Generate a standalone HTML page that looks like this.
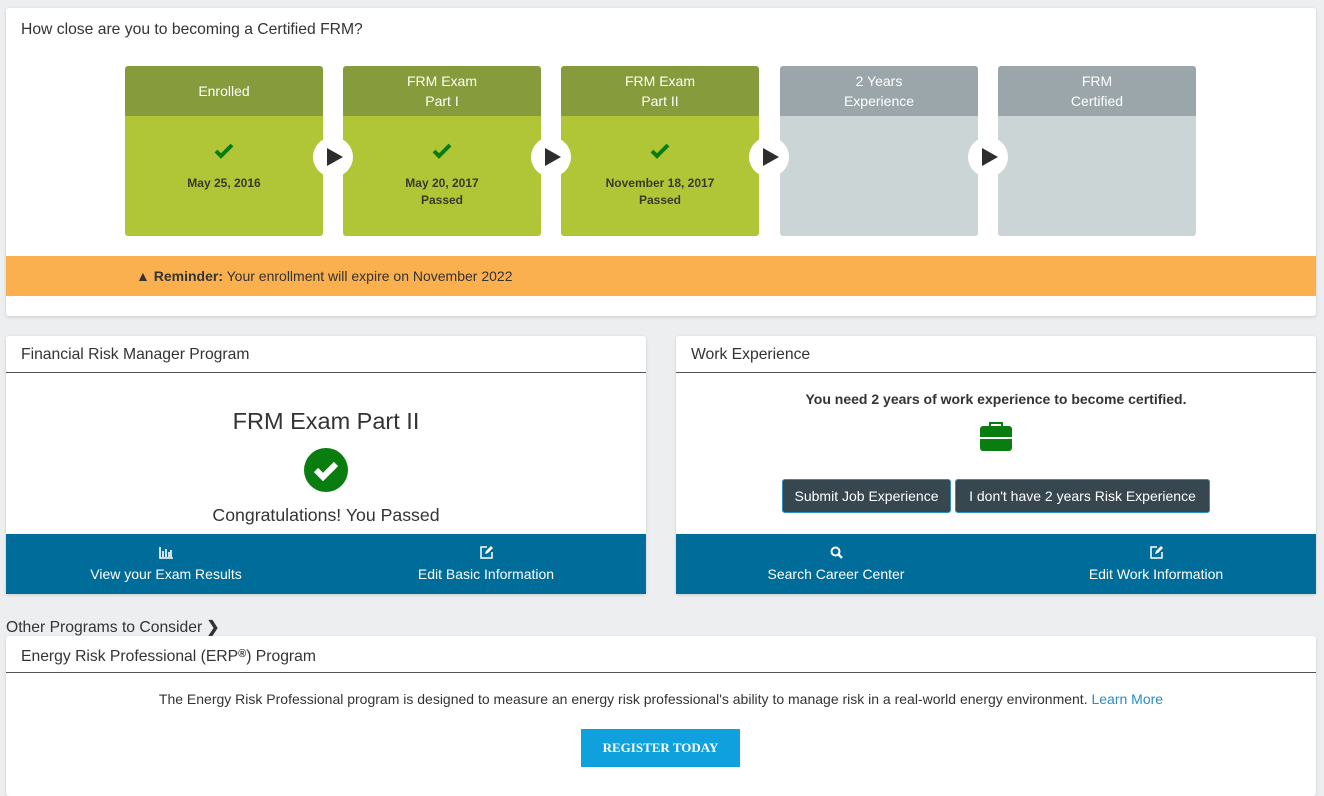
<!DOCTYPE html>
<html><head><style>
*{box-sizing:border-box;margin:0;padding:0}
body{width:1324px;height:779px;overflow:hidden;background:#eceef0;font-family:"Liberation Sans",Arial,sans-serif;color:#333;position:relative}
.card{position:absolute;background:#fff;border-radius:3px;box-shadow:0 1px 3px rgba(0,0,0,.15)}
.abs{position:absolute}
.step{position:absolute;top:66px;width:198px;height:170px;border-radius:3px;overflow:hidden;text-align:center}
.step .h{height:50px;color:#fff;font-size:14px;line-height:20px;display:flex;align-items:center;justify-content:center}
.step .b{height:120px;font-size:12px;font-weight:bold;color:#3a3a2a;line-height:17px}
.g .h{background:#869b3b}.g .b{background:#b0c636}
.x .h{background:#9ba6ab}.x .b{background:#cbd5d6}
.chk{display:block;padding-top:27px;height:59px}
.arr{position:absolute;top:137px;width:40px;height:40px;border-radius:50%;background:#fff}
.arr:after{content:"";position:absolute;left:14px;top:11px;border-left:16px solid #2d2d2d;border-top:9px solid transparent;border-bottom:9px solid transparent}
.hd{height:37px;border-bottom:1px solid #555;padding-left:15px;line-height:37px;font-size:15.7px}
.foot{position:absolute;left:0;right:0;bottom:0;height:60px;background:#006c9a;color:#fff;font-size:14px;display:flex}
.foot div{flex:1;text-align:center;padding-top:10px;line-height:20px}
.btn{position:absolute;background:#37474f;color:#fff;font-size:14px;border:1px solid #2a90c0;border-radius:3px;height:34px;line-height:32px;text-align:center}
</style></head><body>
<div class="card" style="left:6px;top:8px;width:1310px;height:308px">
<div class="abs" style="left:15px;top:13px;font-size:15.7px">How close are you to becoming a Certified FRM?</div>
</div>
<div class="step g" style="left:125px"><div class="h">Enrolled</div><div class="b"><span class="chk"><svg width="20" height="16" viewBox="0 0 20 16"><path d="M2 8l5 5L18 2" fill="none" stroke="#0a7d10" stroke-width="4"/></svg></span>May 25, 2016</div></div>
<div class="step g" style="left:343px"><div class="h">FRM Exam<br>Part I</div><div class="b"><span class="chk"><svg width="20" height="16" viewBox="0 0 20 16"><path d="M2 8l5 5L18 2" fill="none" stroke="#0a7d10" stroke-width="4"/></svg></span>May 20, 2017<br>Passed</div></div>
<div class="step g" style="left:561px"><div class="h">FRM Exam<br>Part II</div><div class="b"><span class="chk"><svg width="20" height="16" viewBox="0 0 20 16"><path d="M2 8l5 5L18 2" fill="none" stroke="#0a7d10" stroke-width="4"/></svg></span>November 18, 2017<br>Passed</div></div>
<div class="step x" style="left:780px"><div class="h">2 Years<br>Experience</div><div class="b"></div></div>
<div class="step x" style="left:998px"><div class="h">FRM<br>Certified</div><div class="b"></div></div>
<div class="arr" style="left:313px"></div><div class="arr" style="left:531px"></div><div class="arr" style="left:749px"></div><div class="arr" style="left:968px"></div>
<div class="abs" style="left:6px;top:256px;width:1310px;height:40px;background:#fbb04f;font-size:14px;line-height:40px;padding-left:130px;color:#333"><b>▲ Reminder:</b> Your enrollment will expire on November 2022</div>

<div class="card" style="left:6px;top:336px;width:640px;height:258px">
<div class="hd">Financial Risk Manager Program</div>
<div class="abs" style="left:0;right:0;top:72px;text-align:center;font-size:23.5px">FRM Exam Part II</div>
<div class="abs" style="left:298px;top:112px;width:44px;height:44px;border-radius:50%;background:#0a7d10"><svg width="44" height="44" viewBox="0 0 44 44"><path d="M12 22l7 7 13-13" fill="none" stroke="#fff" stroke-width="6"/></svg></div>
<div class="abs" style="left:0;right:0;top:169px;text-align:center;font-size:17.7px">Congratulations! You Passed</div>
<div class="foot"><div><svg width="14" height="12" viewBox="0 0 14 12"><path d="M1 0v11h13M4 4v6M7 2v8M10 5v5M12 3v7" stroke="#fff" stroke-width="1.6" fill="none"/></svg><br>View your Exam Results</div><div><svg width="13" height="13" viewBox="0 0 13 13"><path d="M7 1H1v11h11V6" stroke="#fff" stroke-width="1.5" fill="none"/><path d="M5 8l1-3 5-5 2 2-5 5z" fill="#fff"/></svg><br>Edit Basic Information</div></div>
</div>

<div class="card" style="left:676px;top:336px;width:640px;height:258px">
<div class="hd">Work Experience</div>
<div class="abs" style="left:0;right:0;top:55px;text-align:center;font-size:14px;font-weight:bold">You need 2 years of work experience to become certified.</div>
<div class="abs" style="left:304px;top:90px;width:32px;height:25px;background:#0a7d10;border-radius:3px"></div>
<div class="abs" style="left:313px;top:86px;width:14px;height:6px;border:2px solid #0a7d10;border-bottom:none"></div>
<div class="abs" style="left:304px;top:101px;width:32px;height:2px;background:#fff"></div>
<div class="btn" style="left:106px;top:143px;width:169px">Submit Job Experience</div>
<div class="btn" style="left:279px;top:143px;width:255px">I don't have 2 years Risk Experience</div>
<div class="foot"><div><svg width="13" height="13" viewBox="0 0 13 13"><circle cx="5.5" cy="5.5" r="4" stroke="#fff" stroke-width="2" fill="none"/><path d="M8.5 8.5l3.5 3.5" stroke="#fff" stroke-width="2.4"/></svg><br>Search Career Center</div><div><svg width="13" height="13" viewBox="0 0 13 13"><path d="M7 1H1v11h11V6" stroke="#fff" stroke-width="1.5" fill="none"/><path d="M5 8l1-3 5-5 2 2-5 5z" fill="#fff"/></svg><br>Edit Work Information</div></div>
</div>

<div class="abs" style="left:6px;top:617px;font-size:15.7px">Other Programs to Consider <b>❯</b></div>
<div class="card" style="left:6px;top:636px;width:1310px;height:160px">
<div class="hd">Energy Risk Professional (ERP<b style="font-size:11px;vertical-align:4px">®</b>) Program</div>
<div class="abs" style="left:0;right:0;top:55px;text-align:center;font-size:14px">The Energy Risk Professional program is designed to measure an energy risk professional's ability to manage risk in a real-world energy environment. <span style="color:#2a8bc8">Learn More</span></div>
<div class="abs" style="left:575px;top:93px;width:159px;height:38px;background:#0ea1dd;color:#fff;font-weight:bold;font-size:13px;text-align:center;line-height:38px;font-family:'Liberation Serif',serif">REGISTER TODAY</div>
</div>
</body></html>
